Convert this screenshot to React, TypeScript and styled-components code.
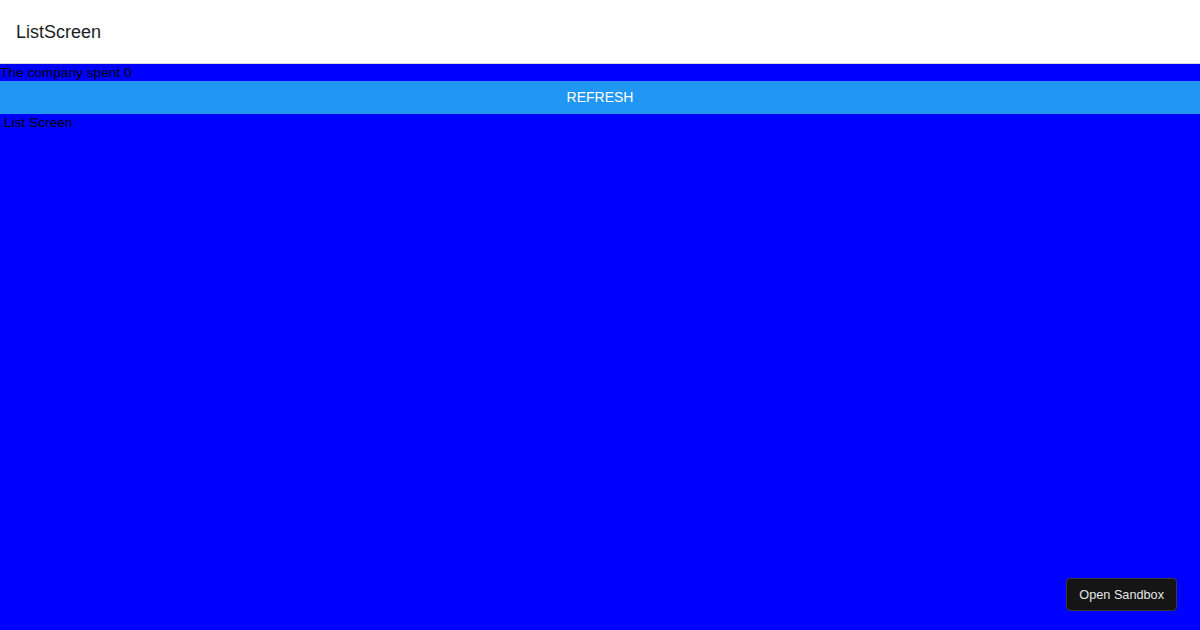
import React, { useState } from 'react';
import styled, { createGlobalStyle } from 'styled-components';

const GlobalStyle = createGlobalStyle`
  html, body {
    margin: 0;
    padding: 0;
    height: 100%;
  }
  body {
    font-family: "Liberation Sans", Arial, sans-serif;
  }
  #root {
    height: 100%;
  }
`;

const Screen = styled.div`
  display: flex;
  flex-direction: column;
  width: 100%;
  height: 100vh;
  position: relative;
`;

const Header = styled.header`
  height: 64px;
  flex-shrink: 0;
  background-color: #fff;
  border-bottom: 1px solid #d8d8d8;
  display: flex;
  align-items: center;
  padding: 2px 16px 0;
  box-sizing: border-box;
`;

const HeaderTitle = styled.h1`
  margin: 0;
  font-size: 18px;
  font-weight: 400;
  color: #1c1c1e;
`;

const Body = styled.main`
  flex: 1;
  background-color: #0000ff;
  display: flex;
  flex-direction: column;
`;

const Line = styled.div<{ $indent?: number }>`
  font-size: 13.7px;
  line-height: 17px;
  color: #000;
  padding-left: ${p => p.$indent ?? 0}px;
`;

const RefreshButton = styled.button`
  height: 33px;
  width: 100%;
  border: none;
  padding: 0 0 1px;
  background-color: #2196f3;
  color: #fff;
  font-family: inherit;
  font-size: 14px;
  text-transform: uppercase;
  cursor: pointer;
`;

const SandboxButton = styled.button`
  position: absolute;
  right: 23px;
  bottom: 19px;
  height: 33px;
  padding: 0 12px;
  background-color: #151515;
  border: 1px solid #3a3a3a;
  border-radius: 4px;
  color: #e6e6e6;
  font-family: inherit;
  font-size: 12.7px;
  cursor: pointer;
`;

export default function App() {
  const [spent, setSpent] = useState(0);

  return (
    <Screen>
      <GlobalStyle />
      <Header>
        <HeaderTitle>ListScreen</HeaderTitle>
      </Header>
      <Body>
        <Line>The company spent {spent}</Line>
        <RefreshButton onClick={() => setSpent(0)}>Refresh</RefreshButton>
        <Line $indent={4}>List Screen</Line>
      </Body>
      <SandboxButton>Open Sandbox</SandboxButton>
    </Screen>
  );
}
